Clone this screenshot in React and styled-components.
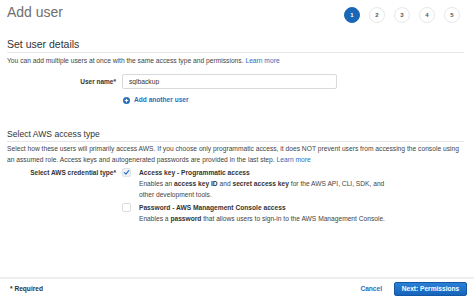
import React from "react";
import styled, { createGlobalStyle } from "styled-components";

const GlobalStyle = createGlobalStyle`
  html, body { margin: 0; padding: 0; background: #fff; }
  body { font-family: "Liberation Sans", Arial, sans-serif; color: #444; }
  * { box-sizing: border-box; }
`;

const Page = styled.div`
  width: 474px;
  height: 298px;
  display: flex;
  flex-direction: column;
  overflow: hidden;
`;

const Main = styled.main`
  flex: 1;
  padding: 0 10px 0 7px;
  display: flex;
  flex-direction: column;
`;

const Header = styled.header`
  display: flex;
  justify-content: space-between;
  align-items: flex-start;
  height: 30px;
  padding-right: 4px;
`;

const Title = styled.h1`
  margin: 0;
  padding-top: 4px;
  font-size: 14px;
  line-height: 16px;
  font-weight: normal;
  color: #6f6f6f;
`;

const Steps = styled.ol`
  list-style: none;
  margin: 7px 0 0;
  padding: 0;
  display: flex;
  gap: 9px;
`;

const Step = styled.li`
  width: 16px;
  height: 16px;
  border-radius: 50%;
  display: flex;
  align-items: center;
  justify-content: center;
  font-size: 6px;
  font-weight: bold;
  color: ${(p) => (p.$active ? "#fff" : "#555")};
  background: ${(p) => (p.$active ? "#1a67b8" : "#fff")};
  border: 1px solid ${(p) => (p.$active ? "#1a67b8" : "#e8e8e8")};
`;

const SectionTitle = styled.h2`
  margin: ${(p) => p.$mt}px 0 0;
  padding-bottom: 2px;
  border-bottom: 1px solid #e6e6e6;
  font-weight: normal;
  color: #333;
  font-size: ${(p) => p.$size}px;
  line-height: ${(p) => p.$lh}px;
`;

const Desc = styled.p`
  margin: ${(p) => p.$mt}px 0 0;
  font-size: 6.7px;
  line-height: ${(p) => p.$lh}px;
  color: #444;
`;

const Link = styled.a`
  color: #2a6ebb;
  text-decoration: none;
`;

const FormRow = styled.div`
  display: grid;
  grid-template-columns: 109px 1fr;
  column-gap: 6px;
  align-items: ${(p) => p.$align || "center"};
  margin-top: ${(p) => p.$mt}px;
`;

const Label = styled.label`
  text-align: right;
  font-size: 6.5px;
  font-weight: bold;
  color: #333;
  line-height: 11px;
`;

const Input = styled.input`
  width: 215px;
  height: 15px;
  border: 1px solid #d9d9d9;
  border-radius: 2px;
  padding: 0 6px;
  font-family: inherit;
  font-size: 6.7px;
  color: #333;
  outline: none;
`;

const AddLink = styled.a`
  display: flex;
  align-items: center;
  gap: 4px;
  margin: 6px 0 0 116px;
  font-size: 6.6px;
  line-height: 10px;
  font-weight: bold;
  color: #2a6ebb;
  text-decoration: none;
`;

const Options = styled.div`
  display: flex;
  flex-direction: column;
  gap: 2px;
`;

const Option = styled.div`
  display: grid;
  grid-template-columns: 9px 1fr;
  column-gap: 8px;
  align-items: start;
`;

const Box = styled.span`
  width: 9px;
  height: 9px;
  margin-top: 1px;
  border-radius: 2px;
  border: 1px solid ${(p) => (p.$checked ? "#dfe4ea" : "#dcdcdc")};
  background: ${(p) => (p.$checked ? "#eef1f5" : "#fff")};
  display: flex;
  align-items: center;
  justify-content: center;
`;

const OptionText = styled.div`
  font-size: 6.65px;
  line-height: 11px;
  color: #444;
  b { color: #333; }
`;

const OptionTitle = styled.div`
  font-weight: bold;
  color: #333;
`;

const Footer = styled.footer`
  height: 21px;
  border-top: 2px solid #eeeeee;
  display: flex;
  align-items: center;
  padding: 0 7px 0 10px;
  font-size: 6.6px;
`;

const Required = styled.span`
  font-weight: bold;
  color: #333;
  flex: 1;
`;

const Cancel = styled.a`
  font-weight: bold;
  color: #2a6ebb;
  margin-right: 12px;
`;

const Primary = styled.button`
  width: 73px;
  height: 14px;
  padding: 0;
  border: 1px solid #1457a5;
  border-radius: 2px;
  background: linear-gradient(#2b80d6, #1664bc);
  color: #fff;
  font-family: inherit;
  font-size: 6.6px;
  font-weight: bold;
`;

const Check = () => (
  <svg width="7" height="7" viewBox="0 0 10 10">
    <path d="M2 5.2 L4.2 7.4 L8.2 2.4" fill="none" stroke="#2a6ebb" strokeWidth="1.6" strokeLinecap="round" strokeLinejoin="round" />
  </svg>
);

const PlusCircle = () => (
  <svg width="7" height="7" viewBox="0 0 10 10">
    <circle cx="5" cy="5" r="5" fill="#2a6ebb" />
    <path d="M5 2.5 V7.5 M2.5 5 H7.5" stroke="#fff" strokeWidth="1.6" />
  </svg>
);

export default function App() {
  return (
    <Page>
      <GlobalStyle />
      <Main>
        <Header>
          <Title>Add user</Title>
          <Steps>
            {[1, 2, 3, 4, 5].map((n) => (
              <Step key={n} $active={n === 1}>{n}</Step>
            ))}
          </Steps>
        </Header>

        <SectionTitle $mt={8} $size={10.5} $lh={12}>Set user details</SectionTitle>
        <Desc $mt={3} $lh={10}>
          You can add multiple users at once with the same access type and permissions. <Link href="#">Learn more</Link>
        </Desc>

        <FormRow $mt={8}>
          <Label>User name*</Label>
          <Input defaultValue="sqlbackup" />
        </FormRow>
        <AddLink href="#"><PlusCircle />Add another user</AddLink>

        <SectionTitle $mt={24} $size={8.6} $lh={10}>Select AWS access type</SectionTitle>
        <Desc $mt={1} $lh={11}>
          Select how these users will primarily access AWS. If you choose only programmatic access, it does NOT prevent users from accessing the console using<br />
          an assumed role. Access keys and autogenerated passwords are provided in the last step. <Link href="#">Learn more</Link>
        </Desc>

        <FormRow $mt={2} $align="start">
          <Label>Select AWS credential type*</Label>
          <Options>
            <Option>
              <Box $checked><Check /></Box>
              <OptionText>
                <OptionTitle>Access key - Programmatic access</OptionTitle>
                Enables an <b>access key ID</b> and <b>secret access key</b> for the AWS API, CLI, SDK, and<br />
                other development tools.
              </OptionText>
            </Option>
            <Option>
              <Box />
              <OptionText>
                <OptionTitle>Password - AWS Management Console access</OptionTitle>
                Enables a <b>password</b> that allows users to sign-in to the AWS Management Console.
              </OptionText>
            </Option>
          </Options>
        </FormRow>
      </Main>
      <Footer>
        <Required>* Required</Required>
        <Cancel>Cancel</Cancel>
        <Primary>Next: Permissions</Primary>
      </Footer>
    </Page>
  );
}
